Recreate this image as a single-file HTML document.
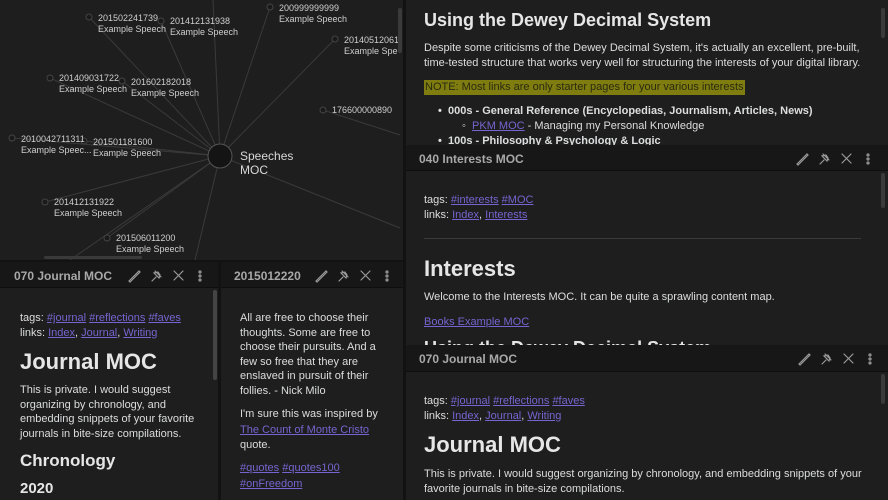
<!DOCTYPE html>
<html><head><meta charset="utf-8"><style>
*{margin:0;padding:0;box-sizing:border-box}
body{width:888px;height:500px;overflow:hidden;background:#1e1e1e;font-family:"Liberation Sans",sans-serif;color:#dcddde;position:relative}
.a{position:absolute;white-space:nowrap}
.hdr{position:absolute;background:#171717;border-bottom:1px solid #0e0e0e}
.tt{position:absolute;top:7px;font-size:12px;font-weight:bold;color:#a8a8a8}
.ic{position:absolute;top:5px}
.l{color:#7565d0;text-decoration:underline}
.p{font-size:11px;line-height:15px;color:#dcddde}
.h1{font-size:22px;font-weight:bold;color:#e6e6e6}
.lbl{font-size:9px;line-height:11px;color:#cfcfcf;position:absolute;white-space:nowrap}
.sb{position:absolute;background:#3a3a3a;border-radius:3px}
</style></head><body>
<div class="a" style="left:0;top:0;width:403px;height:260px;background:#1e1e1e">
<svg width="403" height="260" style="position:absolute;left:0;top:0">
<g stroke="#3a3a3a" stroke-width="1">
<line x1="220" y1="156" x2="89" y2="17"/><line x1="220" y1="156" x2="161" y2="21"/>
<line x1="220" y1="156" x2="270" y2="7"/><line x1="220" y1="156" x2="335" y2="39"/>
<line x1="220" y1="156" x2="50" y2="78"/><line x1="220" y1="156" x2="122" y2="81"/>
<line x1="220" y1="156" x2="12" y2="138"/><line x1="220" y1="156" x2="84" y2="141"/>
<line x1="220" y1="156" x2="45" y2="202"/><line x1="220" y1="156" x2="107" y2="238"/>
<line x1="220" y1="156" x2="213" y2="0"/><line x1="220" y1="156" x2="400" y2="228"/>
<line x1="220" y1="156" x2="195" y2="260"/><line x1="220" y1="156" x2="70" y2="260"/>
<line x1="323" y1="110" x2="400" y2="135"/>
</g>
<g fill="#1a1a1a" stroke="#444" stroke-width="1">
<circle cx="89" cy="17" r="3"/><circle cx="161" cy="21" r="3"/><circle cx="270" cy="7" r="3"/>
<circle cx="335" cy="39" r="3"/><circle cx="50" cy="78" r="3"/><circle cx="122" cy="81" r="3"/>
<circle cx="323" cy="110" r="3"/><circle cx="12" cy="138" r="3"/><circle cx="84" cy="141" r="3"/>
<circle cx="45" cy="202" r="3"/><circle cx="107" cy="238" r="3"/>
<circle cx="220" cy="156" r="12" fill="#141414" stroke="#555"/>
</g></svg>
<div class="lbl" style="left:98px;top:13px">201502241739<br>Example Speech</div>
<div class="lbl" style="left:170px;top:16px">201412131938<br>Example Speech</div>
<div class="lbl" style="left:279px;top:3px">200999999999<br>Example Speech</div>
<div class="lbl" style="left:344px;top:35px">20140512061<br>Example Spe</div>
<div class="lbl" style="left:59px;top:73px">201409031722<br>Example Speech</div>
<div class="lbl" style="left:131px;top:77px">201602182018<br>Example Speech</div>
<div class="lbl" style="left:332px;top:105px">176600000890</div>
<div class="lbl" style="left:21px;top:134px">2010042711311<br>Example Speec...</div>
<div class="lbl" style="left:93px;top:137px">201501181600<br>Example Speech</div>
<div class="lbl" style="left:54px;top:197px">201412131922<br>Example Speech</div>
<div class="lbl" style="left:116px;top:233px">201506011200<br>Example Speech</div>
<div class="a" style="left:240px;top:149px;font-size:12px;line-height:14px;color:#d8d8d8">Speeches<br>MOC</div>
<div class="sb" style="left:398px;top:8px;width:4px;height:45px"></div>
<div class="sb" style="left:44px;top:256px;width:98px;height:3px"></div>
</div>
<div class="a" style="left:403px;top:0;width:3px;height:500px;background:#121212"></div>
<div class="a" style="left:0;top:260px;width:403px;height:2px;background:#121212"></div>

<div class="hdr" style="left:0;top:262px;width:218px;height:26px">
<div class="tt" style="left:14px">070 Journal MOC</div>
<svg class="ic" style="left:127px" width="80" height="16" fill="none" stroke="#9a9a9a" stroke-width="1.2" stroke-linecap="round">
<path d="M2 14 L12 4 L13 5 L3 15 Z"/>
<path d="M25 14 L29 10 M28 4 L34 10 M27 6 L31 5 L33 8 L32 11 Z"/>
<path d="M47 4 L56 13 M56 4 L47 13"/>
<circle cx="73" cy="5" r="1"/><circle cx="73" cy="9" r="1"/><circle cx="73" cy="13" r="1"/>
</svg></div>
<div class="a" style="left:218px;top:262px;width:3px;height:238px;background:#121212"></div>
<div class="hdr" style="left:221px;top:262px;width:182px;height:26px">
<div class="tt" style="left:13px">2015012220</div>
<svg class="ic" style="left:93px" width="80" height="16" fill="none" stroke="#9a9a9a" stroke-width="1.2" stroke-linecap="round">
<path d="M2 14 L12 4 L13 5 L3 15 Z"/>
<path d="M25 14 L29 10 M28 4 L34 10 M27 6 L31 5 L33 8 L32 11 Z"/>
<path d="M47 4 L56 13 M56 4 L47 13"/>
<circle cx="73" cy="5" r="1"/><circle cx="73" cy="9" r="1"/><circle cx="73" cy="13" r="1"/>
</svg></div>
<div class="sb" style="left:213px;top:290px;width:4px;height:90px;background:#444"></div>

<div class="a p" style="left:20px;top:311px">tags: <span class="l">#journal</span> <span class="l">#reflections</span> <span class="l">#faves</span><br>links: <span class="l">Index</span>, <span class="l">Journal</span>, <span class="l">Writing</span></div>
<div class="a h1" style="left:20px;top:349px">Journal MOC</div>
<div class="a p" style="left:20px;top:383px;line-height:14.5px">This is private. I would suggest<br>organizing by chronology, and<br>embedding snippets of your favorite<br>journals in bite-size compilations.</div>
<div class="a" style="left:20px;top:451px;font-size:17px;font-weight:bold;color:#e6e6e6">Chronology</div>
<div class="a" style="left:20px;top:480px;font-size:15px;font-weight:bold;color:#e6e6e6">2020</div>

<div class="a p" style="left:240px;top:311px;line-height:14.5px">All are free to choose their<br>thoughts. Some are free to<br>choose their pursuits. And a<br>few so free that they are<br>enslaved in pursuit of their<br>follies. - Nick Milo</div>
<div class="a p" style="left:240px;top:407px;line-height:15.5px">I'm sure this was inspired by<br><span class="l">The Count of Monte Cristo</span><br>quote.</div>
<div class="a p" style="left:240px;top:461px;line-height:15.5px"><span class="l">#quotes</span> <span class="l">#quotes100</span><br><span class="l">#onFreedom</span></div>

<div class="a h1" style="left:424px;top:10px;font-size:18px">Using the Dewey Decimal System</div>
<div class="a p" style="left:424px;top:41px">Despite some criticisms of the Dewey Decimal System, it's actually an excellent, pre-built,<br>time-tested structure that works very well for structuring the interests of your digital library.</div>
<div class="a p" style="left:424px;top:80px;background:#7f7d10;color:#2a2a10;padding:0 1px">NOTE: Most links are only starter pages for your various interests</div>
<div class="a p" style="left:438px;top:104px;font-weight:bold">•&nbsp; 000s - General Reference (Encyclopedias, Journalism, Articles, News)</div>
<div class="a p" style="left:462px;top:119px">◦&nbsp; <span class="l">PKM MOC</span> - Managing my Personal Knowledge</div>
<div class="a p" style="left:438px;top:134px;font-weight:bold">•&nbsp; 100s - Philosophy &amp; Psychology &amp; Logic</div>
<div class="sb" style="left:881px;top:8px;width:4px;height:30px"></div>

<div class="hdr" style="left:406px;top:145px;width:482px;height:26px">
<div class="tt" style="left:13px">040 Interests MOC</div>
<svg class="ic" style="left:389px" width="80" height="16" fill="none" stroke="#9a9a9a" stroke-width="1.2" stroke-linecap="round">
<path d="M2 14 L12 4 L13 5 L3 15 Z"/>
<path d="M25 14 L29 10 M28 4 L34 10 M27 6 L31 5 L33 8 L32 11 Z"/>
<path d="M47 4 L56 13 M56 4 L47 13"/>
<circle cx="73" cy="5" r="1"/><circle cx="73" cy="9" r="1"/><circle cx="73" cy="13" r="1"/>
</svg></div>
<div class="a p" style="left:424px;top:193px">tags: <span class="l">#interests</span> <span class="l">#MOC</span><br>links: <span class="l">Index</span>, <span class="l">Interests</span></div>
<div class="a" style="left:424px;top:238px;width:437px;height:1px;background:#3a3a3a"></div>
<div class="a h1" style="left:424px;top:256px">Interests</div>
<div class="a p" style="left:424px;top:290px">Welcome to the Interests MOC. It can be quite a sprawling content map.</div>
<div class="a p" style="left:424px;top:315px"><span class="l">Books Example MOC</span></div>
<div class="a h1" style="left:424px;top:338px;font-size:18px;height:7px;overflow:hidden">Using the Dewey Decimal System</div>
<div class="sb" style="left:881px;top:173px;width:4px;height:35px"></div>

<div class="hdr" style="left:406px;top:345px;width:482px;height:27px">
<div class="tt" style="left:13px">070 Journal MOC</div>
<svg class="ic" style="left:391px" width="80" height="16" fill="none" stroke="#9a9a9a" stroke-width="1.2" stroke-linecap="round">
<path d="M2 14 L12 4 L13 5 L3 15 Z"/>
<path d="M25 14 L29 10 M28 4 L34 10 M27 6 L31 5 L33 8 L32 11 Z"/>
<path d="M47 4 L56 13 M56 4 L47 13"/>
<circle cx="73" cy="5" r="1"/><circle cx="73" cy="9" r="1"/><circle cx="73" cy="13" r="1"/>
</svg></div>
<div class="a p" style="left:424px;top:394px">tags: <span class="l">#journal</span> <span class="l">#reflections</span> <span class="l">#faves</span><br>links: <span class="l">Index</span>, <span class="l">Journal</span>, <span class="l">Writing</span></div>
<div class="a h1" style="left:424px;top:432px">Journal MOC</div>
<div class="a p" style="left:424px;top:467px">This is private. I would suggest organizing by chronology, and embedding snippets of your<br>favorite journals in bite-size compilations.</div>
<div class="sb" style="left:881px;top:374px;width:4px;height:30px"></div>
</body></html>
